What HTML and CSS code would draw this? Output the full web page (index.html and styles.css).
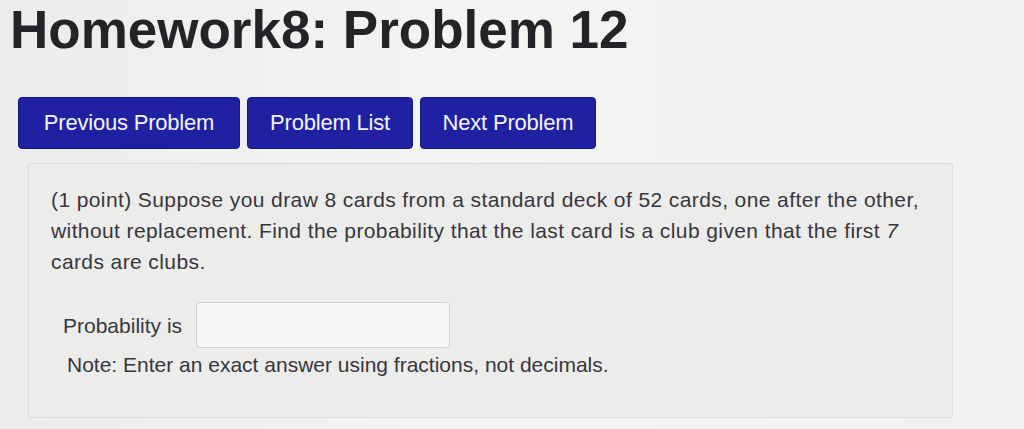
FILE: index.html
```html
<!DOCTYPE html>
<html>
<head>
<meta charset="utf-8">
<link rel="stylesheet" href="styles.css">
</head>
<body>
<h1 class="title">Homework8: Problem 12</h1>
<div class="nav">
  <a class="btn btn-prev">Previous Problem</a>
  <a class="btn btn-list">Problem List</a>
  <a class="btn btn-next">Next Problem</a>
</div>
<div class="panel">
  <p class="problem">(1 point) Suppose you draw 8 cards from a standard deck of 52 cards, one after the other,<br>without replacement. Find the probability that the last card is a club given that the first <i>7</i><br>cards are clubs.</p>
  <div class="answer">
    <div class="row">
      <span class="label">Probability is</span>
      <input class="field" type="text">
    </div>
    <p class="note">Note: Enter an exact answer using fractions, not decimals.</p>
  </div>
</div>
</body>
</html>
```
FILE: styles.css
```css
html, body {
  margin: 0;
  padding: 0;
}
body {
  background: linear-gradient(90deg, #ececec 0%, #f4f4f3 45%, #f1f1f1 100%);
  font-family: "Liberation Sans", Arial, sans-serif;
  width: 1024px;
  height: 429px;
  overflow: hidden;
}
.title {
  margin: 0;
  padding-left: 10px;
  font-size: 53px;
  line-height: 60px;
  font-weight: bold;
  color: #252228;
}
.nav {
  display: flex;
  gap: 7px;
  margin: 37px 0 0 18px;
}
.btn {
  display: flex;
  align-items: center;
  justify-content: center;
  box-sizing: border-box;
  height: 52px;
  background: #1f21a2;
  border: 1px solid #15177e;
  border-radius: 4px;
  color: #f4f4f8;
  font-size: 22px;
  letter-spacing: -0.2px;
}
.btn-prev { width: 222px; }
.btn-list { width: 166px; }
.btn-next { width: 176px; }
.panel {
  margin: 14px 0 0 28px;
  width: 879px;
  height: 233px;
  padding: 20px 22px 0 22px;
  background: #ececeb;
  border: 1px solid #dcdcdc;
  border-radius: 3px;
  color: #38363d;
}
.problem {
  margin: 0;
  font-size: 21px;
  line-height: 31px;
  letter-spacing: 0.4px;
  white-space: nowrap;
}
.problem i {
  font-style: italic;
}
.answer {
  margin: 25px 0 0 12px;
}
.row {
  display: flex;
  align-items: center;
  gap: 14px;
}
.label {
  font-size: 21px;
  line-height: 31px;
}
.field {
  width: 254px;
  height: 46px;
  box-sizing: border-box;
  border: 1px solid #cfcfcf;
  border-radius: 4px;
  background: #f7f7f7;
}
.note {
  margin: 1px 0 0 4px;
  font-size: 21px;
  line-height: 31px;
}
```
